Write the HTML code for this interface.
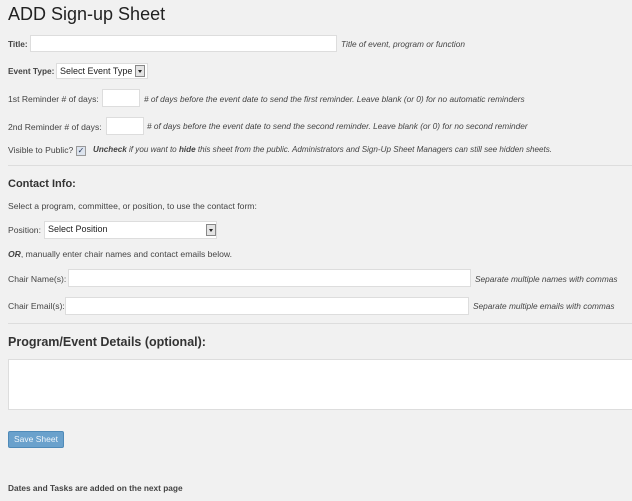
<!DOCTYPE html>
<html><head><style>
body{margin:0;width:632px;height:501px;background:#f1f1f1;font-family:"Liberation Sans",sans-serif;color:#444;font-size:8.6px;position:relative;overflow:hidden}
.a{position:absolute;white-space:nowrap}
.in{position:absolute;background:#fff;border:1px solid #ddd;box-sizing:border-box}
i{color:#444}
.h{font-size:8.3px}
.hr{position:absolute;left:8px;right:0;height:1px;background:#ddd}
.arr{position:absolute;width:10px;height:12px;border:1px solid #888;background:#e4e4e4;box-sizing:border-box}
.arr:after{content:"";position:absolute;left:2px;top:4px;border-left:2px solid transparent;border-right:2px solid transparent;border-top:3px solid #222}
</style></head><body>
<div class="a" style="left:8px;top:4px;font-size:18px;color:#222">ADD Sign-up Sheet</div>

<div class="a" style="left:8px;top:39px;font-weight:bold;font-size:8.3px">Title:</div>
<div class="in" style="left:30px;top:35px;width:307px;height:17px"></div>
<div class="a h" style="left:341px;top:39px"><i>Title of event, program or function</i></div>

<div class="a" style="left:8px;top:66px;font-weight:bold;font-size:8.3px">Event Type:</div>
<div class="in" style="left:56px;top:63px;width:92px;height:16px"></div>
<div class="a" style="left:60px;top:66px;font-size:9px;color:#222">Select Event Type</div>
<div class="arr" style="left:135px;top:65px"></div>

<div class="a" style="left:8px;top:94px">1st Reminder # of days:</div>
<div class="in" style="left:102px;top:89px;width:38px;height:18px"></div>
<div class="a h" style="left:144px;top:94px"><i># of days before the event date to send the first reminder. Leave blank (or 0) for no automatic reminders</i></div>

<div class="a" style="left:8px;top:122px">2nd Reminder # of days:</div>
<div class="in" style="left:106px;top:117px;width:38px;height:18px"></div>
<div class="a h" style="left:147px;top:121px"><i># of days before the event date to send the second reminder. Leave blank (or 0) for no second reminder</i></div>

<div class="a" style="left:8px;top:145px">Visible to Public?</div>
<div class="a" style="left:76px;top:146px;width:8px;height:8px;border:1px solid #999;background:#dde4ee;font-size:8px;line-height:8px;text-align:center;color:#235">✓</div>
<div class="a" style="left:93px;top:145px;font-size:8.1px"><i><b>Uncheck</b> if you want to <b>hide</b> this sheet from the public. Administrators and Sign-Up Sheet Managers can still see hidden sheets.</i></div>

<div class="hr" style="top:165px"></div>

<div class="a" style="left:8px;top:178px;font-size:11px;font-weight:bold;color:#333">Contact Info:</div>
<div class="a" style="left:8px;top:201px">Select a program, committee, or position, to use the contact form:</div>
<div class="a" style="left:8px;top:225px">Position:</div>
<div class="in" style="left:44px;top:221px;width:173px;height:18px"></div>
<div class="a" style="left:48px;top:224px;font-size:9px;color:#222">Select Position</div>
<div class="arr" style="left:206px;top:224px"></div>
<div class="a" style="left:8px;top:249px"><b><i>OR</i></b>, manually enter chair names and contact emails below.</div>

<div class="a" style="left:8px;top:274px">Chair Name(s):</div>
<div class="in" style="left:68px;top:269px;width:403px;height:18px"></div>
<div class="a h" style="left:475px;top:274px"><i>Separate multiple names with commas</i></div>

<div class="a" style="left:8px;top:301px">Chair Email(s):</div>
<div class="in" style="left:65px;top:297px;width:404px;height:18px"></div>
<div class="a h" style="left:473px;top:301px"><i>Separate multiple emails with commas</i></div>

<div class="hr" style="top:323px"></div>
<div class="a" style="left:8px;top:335px;font-size:12.5px;font-weight:bold;color:#333">Program/Event Details (optional):</div>
<div class="in" style="left:8px;top:359px;width:630px;height:51px"></div>

<div class="a" style="left:8px;top:431px;width:56px;height:17px;background:#6aa1cc;border:1px solid #4f8ab8;border-radius:2px;box-sizing:border-box;color:#eef5fb;text-align:center;line-height:15px;font-size:8.5px">Save Sheet</div>

<div class="a" style="left:8px;top:483px;font-weight:bold;font-size:8.3px">Dates and Tasks are added on the next page</div>
</body></html>
